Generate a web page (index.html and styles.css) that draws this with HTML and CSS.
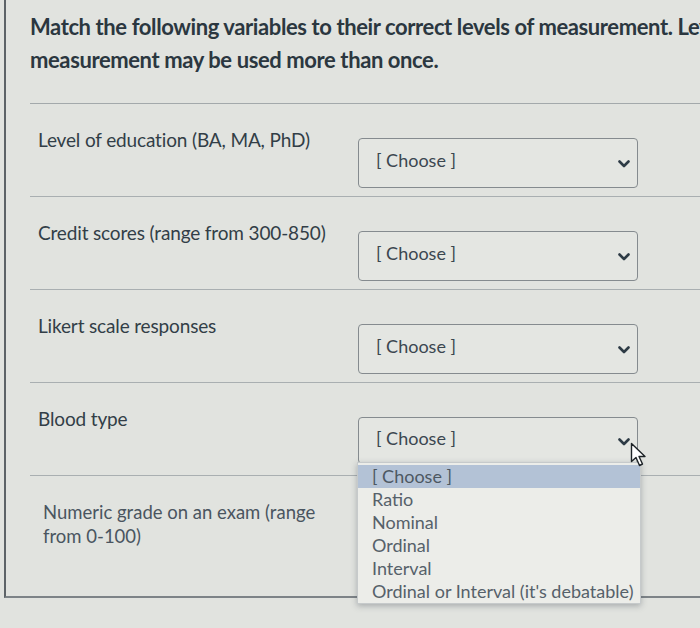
FILE: index.html
```html
<!DOCTYPE html>
<html>
<head>
<meta charset="utf-8">
<link rel="stylesheet" href="styles.css">
</head>
<body>
<div class="frame">
  <div class="title">
    <div class="tline">Match the following variables to their correct levels of measurement. Levels of</div>
    <div class="tline">measurement may be used more than once.</div>
  </div>
  <div class="rows">
    <div class="row">
      <div class="label">Level of education (BA, MA, PhD)</div>
      <div class="select"><span class="sel-text">[ Choose ]</span><svg class="chev" width="12" height="8" viewBox="0 0 12 8"><path d="M1.5 1.5 L6 6 L10.5 1.5" fill="none" stroke="#2d3b45" stroke-width="2.6" stroke-linecap="round" stroke-linejoin="round"/></svg></div>
    </div>
    <div class="row">
      <div class="label">Credit scores (range from 300-850)</div>
      <div class="select"><span class="sel-text">[ Choose ]</span><svg class="chev" width="12" height="8" viewBox="0 0 12 8"><path d="M1.5 1.5 L6 6 L10.5 1.5" fill="none" stroke="#2d3b45" stroke-width="2.6" stroke-linecap="round" stroke-linejoin="round"/></svg></div>
    </div>
    <div class="row">
      <div class="label">Likert scale responses</div>
      <div class="select"><span class="sel-text">[ Choose ]</span><svg class="chev" width="12" height="8" viewBox="0 0 12 8"><path d="M1.5 1.5 L6 6 L10.5 1.5" fill="none" stroke="#2d3b45" stroke-width="2.6" stroke-linecap="round" stroke-linejoin="round"/></svg></div>
    </div>
    <div class="row">
      <div class="label">Blood type</div>
      <div class="select open"><span class="sel-text">[ Choose ]</span><svg class="chev" width="12" height="8" viewBox="0 0 12 8"><path d="M1.5 1.5 L6 6 L10.5 1.5" fill="none" stroke="#2d3b45" stroke-width="2.6" stroke-linecap="round" stroke-linejoin="round"/></svg>
        <svg class="cursor" width="18" height="26" viewBox="0 0 18 26"><path d="M1.5 1.5 L1.5 19.5 L6 15.5 L9.5 23.5 L12.5 22 L9 14.5 L15 14.5 Z" fill="#ffffff" stroke="#1e2428" stroke-width="1.4" stroke-linejoin="round"/></svg>
        <ul class="list">
          <li class="opt active">[ Choose ]</li>
          <li class="opt">Ratio</li>
          <li class="opt">Nominal</li>
          <li class="opt">Ordinal</li>
          <li class="opt">Interval</li>
          <li class="opt">Ordinal or Interval (it's debatable)</li>
        </ul>
      </div>
    </div>
    <div class="row last">
      <div class="label">Numeric grade on an exam (range from 0-100)</div>
      <div class="select"></div>
    </div>
  </div>
</div>
</body>
</html>
```
FILE: styles.css
```css
html, body {
  margin: 0;
  padding: 0;
}
body {
  width: 700px;
  height: 628px;
  overflow: hidden;
  background: #e1e3df;
  font-family: Lato, "Open Sans", sans-serif;
  color: #2f3a42;
}
.frame {
  margin-left: 4px;
  width: 720px;
  height: 598px;
  border-left: 2px solid #5d6367;
  border-bottom: 2px solid #7d8387;
  box-sizing: border-box;
  padding-left: 24px;
}
.title {
  padding-top: 10px;
  height: 104px;
  box-sizing: border-box;
  border-bottom: 1.5px solid #a3a9ab;
  font-size: 22px;
  font-weight: 700;
  line-height: 33px;
  letter-spacing: -0.4px;
  color: #2b3740;
}
.tline {
  white-space: nowrap;
}
.row {
  display: grid;
  grid-template-columns: 320px 280px;
  height: 93px;
  box-sizing: border-box;
  padding-top: 24px;
  padding-left: 8px;
  border-bottom: 1.5px solid #a9afb1;
}
.row.last {
  border-bottom: none;
}
.label {
  font-size: 19px;
  line-height: 24px;
  letter-spacing: -0.15px;
  color: #323e47;
  padding-right: 16px;
}
.row.last .label {
  font-size: 18.5px;
  letter-spacing: 0;
  color: #4a5560;
  padding-left: 5px;
  padding-right: 30px;
}
.select {
  position: relative;
  margin-top: 10px;
  height: 50px;
  box-sizing: border-box;
  border: 1.5px solid #858b8f;
  border-radius: 4px;
  background: #e4e6e2;
  display: flex;
  align-items: center;
  justify-content: space-between;
  padding: 0 7px 0 17px;
}
.sel-text {
  font-size: 18px;
  color: #3b4750;
  margin-top: -6px;
}
.chev {
  margin-top: 2px;
}
.open {
  height: 47px;
}
.cursor {
  position: absolute;
  left: 271px;
  top: 24px;
  z-index: 3;
}
.list {
  position: absolute;
  left: -2px;
  top: 44px;
  width: 282px;
  margin: 0;
  padding: 2px 0 0 0;
  list-style: none;
  background: #ecede9;
  border: 1px solid #c6cacb;
  box-shadow: 0 2px 6px rgba(60, 70, 80, 0.35);
  z-index: 2;
}
.opt {
  height: 23px;
  line-height: 23px;
  padding-left: 14px;
  font-size: 18px;
  color: #56616a;
}
.opt.active {
  background: #b3c2d6;
  color: #4d5862;
}
```
